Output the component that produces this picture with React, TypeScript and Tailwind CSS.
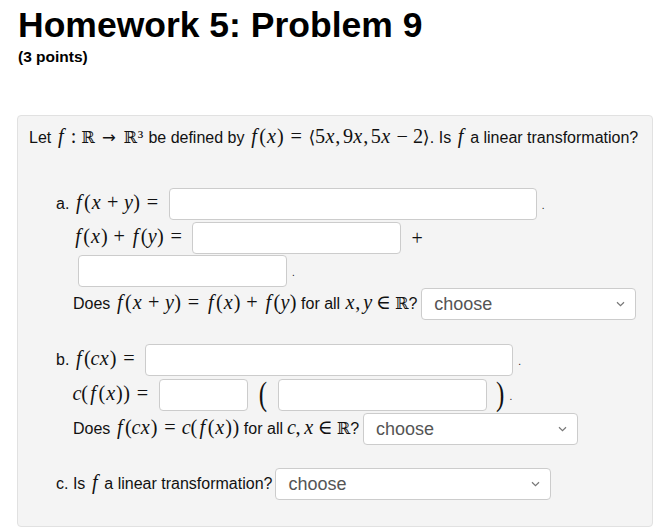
import React from "react";

// widths taken from KaTeX's Computer Modern metrics (em), so spacing matches
const GLYPH: Record<string, string> = {
  f: "w-[0.55em] italic",
  x: "w-[0.572em] italic",
  y: "w-[0.49em] italic",
  c: "w-[0.433em] italic",
  "(": "w-[0.389em]",
  ")": "w-[0.389em]",
  "⟨": "w-[0.389em] font-['DejaVu_Serif',serif]",
  "⟩": "w-[0.389em] font-['DejaVu_Serif',serif]",
  "2": "w-[0.5em]",
  "5": "w-[0.5em]",
  "9": "w-[0.5em]",
  "³": "w-[0.38em]",
  ",": "w-[0.278em] mr-[0.167em]",
  "+": "w-[0.778em] mx-[0.222em]",
  "−": "w-[0.778em] mx-[0.222em]",
  "=": "w-[0.778em] mx-[0.278em]",
  ":": "w-[0.278em] mx-[0.278em]",
  "→": "w-[1em] mx-[0.278em] font-['DejaVu_Sans',sans-serif]",
  "∈": "w-[0.667em] mx-[0.278em]",
  "ℝ": "w-[0.74em] font-['DejaVu_Serif',serif]",
};

// glyph drawn slightly larger than its box, Times is narrower than CM
const INNER: Record<string, string> = {
  "⟨": "text-[0.95em]",
  "⟩": "text-[0.95em]",
  "→": "text-[0.9em]",
  "ℝ": "text-[0.88em]",
  "³": "text-[1em]",
};

function M({ t }: { t: string }) {
  return (
    <span className="whitespace-nowrap font-['Liberation_Serif','DejaVu_Serif',serif] text-[1.15em] leading-none">
      {Array.from(t).map((ch, i) => (
        <span key={i} className={`inline-flex justify-center ${GLYPH[ch] ?? ""}`}>
          <span className={INNER[ch] ?? "text-[1.1em]"}>{ch}</span>
        </span>
      ))}
    </span>
  );
}

function Field({ w }: { w: string }) {
  return <input className={`h-[32px] ${w} shrink-0 rounded border border-[#ccc] bg-white outline-none`} />;
}

function Choose({ w }: { w: string }) {
  return (
    <div
      className={`flex h-[32px] ${w} shrink-0 items-center justify-between rounded border border-[#ccc] bg-white pl-[12px] pr-[10px] text-[18px] text-[#555]`}
    >
      <span>choose</span>
      <svg width="9" height="6" viewBox="0 0 9 6" fill="none">
        <path d="M1 1.2 L4.5 4.6 L8 1.2" stroke="#777" strokeWidth="1.2" />
      </svg>
    </div>
  );
}

function Dot() {
  return <span className="mb-[9px] ml-[5px] self-end text-[10px] leading-none">.</span>;
}

function Paren({ c }: { c: string }) {
  return (
    <span className="inline-block scale-y-[1.35] font-['Liberation_Serif',serif] text-[25px] leading-none text-[#111]">
      {c}
    </span>
  );
}

export default function App() {
  return (
    <div className="min-h-screen bg-white font-['Liberation_Sans',Arial,sans-serif] text-[#111]">
      <div className="pl-[18px] pt-[5px]">
        <h1 className="text-[35.5px] font-bold leading-[40px] text-black">Homework 5: Problem 9</h1>
        <div className="mt-[3px] text-[15.5px] font-bold leading-[18px] text-black">(3 points)</div>
      </div>

      <div className="ml-[17px] mt-[49px] w-[636px] rounded border border-[#e1e1e1] bg-[#f4f4f4] pb-[26px] pt-[10px] text-[16px]">
        {/* question */}
        <div className="whitespace-nowrap pl-[11px] leading-[20px]">
          Let <M t="f:ℝ→ℝ³" /> be defined by <M t="f(x)=⟨5x,9x,5x−2⟩" />. Is <M t="f" /> a linear
          transformation?
        </div>

        {/* part a */}
        <div className="mt-[40px] flex h-[32px] items-center pl-[38px]">
          <span className="mr-[4px] whitespace-nowrap">
            a. <M t="f(x+y)=" />
          </span>
          <Field w="w-[368px]" />
          <Dot />
        </div>
        <div className="mt-[2px] flex h-[32px] items-center pl-[55px]">
          <span className="mr-[4px] whitespace-nowrap">
            <M t="f(x)+f(y)=" />
          </span>
          <Field w="w-[209px]" />
          <span className="ml-[10px] font-['Liberation_Serif',serif] text-[20px]">+</span>
        </div>
        <div className="mt-[1px] flex h-[32px] items-center pl-[60px]">
          <Field w="w-[209px]" />
          <Dot />
        </div>
        <div className="mt-[1px] flex h-[32px] items-center pl-[55px]">
          <span className="mr-[4px] whitespace-nowrap">
            Does <M t="f(x+y)=f(x)+f(y)" /> for all <M t="x,y∈ℝ" />?
          </span>
          <Choose w="w-[215px]" />
        </div>

        {/* part b */}
        <div className="mt-[24px] flex h-[32px] items-center pl-[38px]">
          <span className="mr-[4px] whitespace-nowrap">
            b. <M t="f(cx)=" />
          </span>
          <Field w="w-[368px]" />
          <Dot />
        </div>
        <div className="mt-[3px] flex h-[32px] items-center pl-[55px]">
          <span className="mr-[4px] whitespace-nowrap">
            <M t="c(f(x))=" />
          </span>
          <Field w="w-[89px]" />
          <span className="ml-[11px] mr-[11px]">
            <Paren c="(" />
          </span>
          <Field w="w-[209px]" />
          <span className="ml-[9px]">
            <Paren c=")" />
          </span>
          <Dot />
        </div>
        <div className="mt-[2px] flex h-[32px] items-center pl-[55px]">
          <span className="mr-[4px] whitespace-nowrap">
            Does <M t="f(cx)=c(f(x))" /> for all <M t="c,x∈ℝ" />?
          </span>
          <Choose w="w-[215px]" />
        </div>

        {/* part c */}
        <div className="mt-[23px] flex h-[32px] items-center pl-[38px]">
          <span className="mr-[3px] whitespace-nowrap">
            c. Is <M t="f" /> a linear transformation?
          </span>
          <Choose w="w-[276px]" />
        </div>
      </div>
    </div>
  );
}
